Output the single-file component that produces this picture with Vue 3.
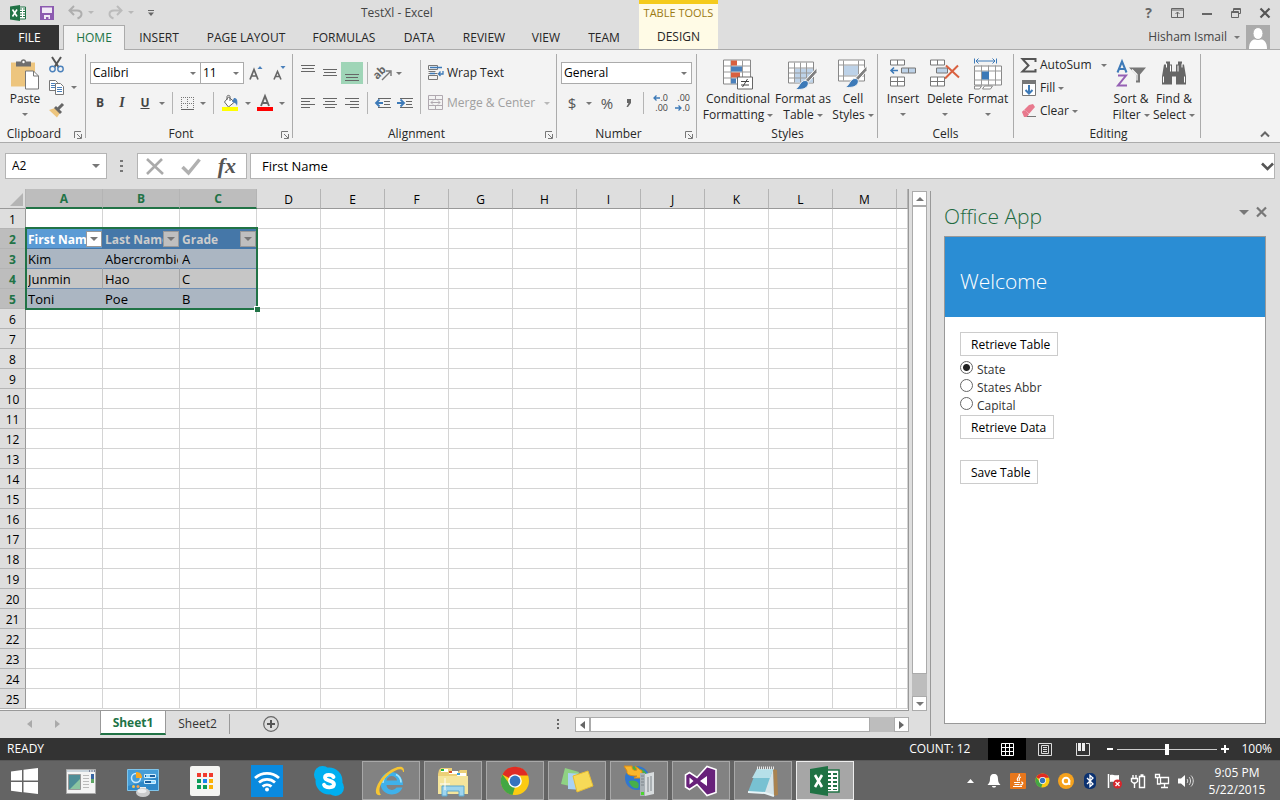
<script setup>
import { ref } from 'vue'

const tabs = [
  { name: 'HOME', w: 'w62' },
  { name: 'INSERT', w: 'w66' },
  { name: 'PAGE LAYOUT', w: 'w108' },
  { name: 'FORMULAS', w: 'w88' },
  { name: 'DATA', w: 'w62' },
  { name: 'REVIEW', w: 'w68' },
  { name: 'VIEW', w: 'w56' },
  { name: 'TEAM', w: 'w60' }
]
const columns = ['A', 'B', 'C', 'D', 'E', 'F', 'G', 'H', 'I', 'J', 'K', 'L', 'M', '']
const cells = {
  2: ['First Name', 'Last Name', 'Grade'],
  3: ['Kim', 'Abercrombie', 'A'],
  4: ['Junmin', 'Hao', 'C'],
  5: ['Toni', 'Poe', 'B']
}
const options = ['State', 'States Abbr', 'Capital']
const picked = ref('State')
const font = ref('Calibri')
const size = ref('11')
const format = ref('General')
const nameBox = ref('A2')
const formula = ref('First Name')
const zoom = ref(50)
</script>

<template>
  <div class="app">
    <header class="titlebar">
      <div class="quick">
        <svg class="q-excel" width="16" height="16" viewBox="0 0 16 16"><path d="M9 2h6.500v12H9z" fill="#fff" stroke="#217346" /><path d="M10 4h2M13 4h2M10 6.500h2M13 6.500h2M10 9h2M13 9h2M10 11.500h2M13 11.500h2" stroke="#217346" /><path d="M0 1.500 10 0v16L0 14.500z" fill="#217346" /><path d="m2.500 4.500 4.500 7M7 4.500l-4.500 7" stroke="#fff" stroke-width="1.600" /></svg>
        <button aria-label="Save"><svg width="14" height="14" viewBox="0 0 14 14"><path d="M0 0h14v14H0z" fill="#8c5bb0" /><path d="M2 1.500h10V7H2zM4 9h6v4H8.500v-2H6v2H4z" fill="#f1e9f6" /></svg></button>
        <button class="undo" aria-label="Undo"><svg width="15" height="13" viewBox="0 0 15 13"><path d="M6 0 1.500 4.500 6 9M2 4.500h7c3 0 4.500 1.500 4.500 3.500S12 11.500 9.500 12.500" fill="none" stroke="#aeaeae" stroke-width="2" /></svg><i class="caret pale"></i></button>
        <button class="redo" aria-label="Redo"><svg width="15" height="13" viewBox="0 0 15 13"><path d="m9 0 4.500 4.500L9 9M13 4.500H6C3 4.500 1.500 6 1.500 8S3 11.500 5.500 12.500" fill="none" stroke="#bbb" stroke-width="2" /></svg><i class="caret pale"></i></button>
        <button class="customize" aria-label="Customize Quick Access Toolbar"><svg width="6" height="6" viewBox="0 0 6 6"><path d="M0 .5h6" stroke="#666" /><path d="M0 2.500h6L3 6z" fill="#666" /></svg></button>
      </div>
      <h1 class="title">TestXl - Excel</h1>
      <div class="window-buttons">
        <button class="help" aria-label="Help">?</button>
        <button aria-label="Ribbon Display Options"><svg width="13" height="10" viewBox="0 0 13 10"><path d="M.5.5h12v9H.5zM.5 2h12M6.500 9V4M4.500 6l2-2 2 2" fill="none" stroke="#666" /></svg></button>
        <button aria-label="Minimize"><svg width="10" height="10" viewBox="0 0 10 10"><path d="M0 6h10" stroke="#666" stroke-width="2" /></svg></button>
        <button aria-label="Restore"><svg width="10" height="10" viewBox="0 0 10 10"><path d="M2.500 3V.5h7v5H7M.5 3.500h7v6h-7zM0 4.500h8M2 1.500h8" fill="none" stroke="#666" /></svg></button>
        <button aria-label="Close"><svg width="10" height="10" viewBox="0 0 10 10"><path d="m.5.5 9 9M9.500.5l-9 9" stroke="#555" stroke-width="2.200" /></svg></button>
      </div>
    </header>

    <nav class="tabs">
      <button class="file">FILE</button>
      <button v-for="t in tabs" :key="t.name" :class="['tab', t.w, { active: t.name === 'HOME' }]">{{ t.name }}</button>
      <div class="context">
        <span>TABLE TOOLS</span>
        <button>DESIGN</button>
      </div>
      <button class="user">Hisham Ismail <i class="caret"></i></button>
      <svg class="avatar" width="24" height="24" viewBox="0 0 24 24"><path d="M0 0h24v24H0z" fill="#ababab" /><path d="M3 24c0-7 3-9.500 6-9.500h6c3 0 6 2.500 6 9.500z" fill="#fff" /><ellipse cx="12" cy="8.500" rx="5" ry="6" fill="#fff" stroke="#ababab" /></svg>
    </nav>

    <section class="ribbon">
      <div class="group g-clip">
        <div class="body">
          <button class="big w42">
            <svg width="28" height="30" viewBox="0 0 28 30"><path d="M0 3h24v24H0z" fill="#edc57e" /><path d="M5 2h5c0-3 5-3 5 0h5v5H5z" fill="#6f6f6f" /><circle cx="12.500" cy="2.500" r="1.200" fill="#fff" /><path d="M14.500 11.500h8l5 5v13h-13z" fill="#fff" stroke="#777" /><path d="M22.500 11.500v5h5" fill="none" stroke="#777" /></svg>
            <span>Paste</span><i class="caret"></i>
          </button>
          <div class="clip-tools">
            <button aria-label="Cut"><svg width="15" height="16" viewBox="0 0 15 16"><path d="m3 0 6.500 10M12 0 5.500 10" stroke="#555" stroke-width="2" /><circle cx="3.500" cy="12" r="2.700" fill="none" stroke="#4a80bb" stroke-width="1.400" /><circle cx="11.500" cy="12" r="2.700" fill="none" stroke="#4a80bb" stroke-width="1.400" /></svg></button>
            <button aria-label="Copy"><svg width="16" height="15" viewBox="0 0 16 15"><path d="M.5.5h6l2 2v8h-8z" fill="#fff" stroke="#777" /><path d="M2 3.500h4M2 5.500h4M2 7.500h4" stroke="#4a80bb" /><path d="M6.500 3.500h5l3 3v8h-8z" fill="#fff" stroke="#777" /><path d="M8 7.500h5M8 9.500h5M8 11.500h5" stroke="#4a80bb" /></svg><i class="caret"></i></button>
            <button aria-label="Format Painter"><svg width="16" height="15" viewBox="0 0 16 15"><path d="M0 7 6 5l5 5-3 4.500z" fill="#edc57e" /><path d="m5 5 2-2 6 6-2 2z" fill="#666" /><path d="m9 6 5-5" stroke="#666" stroke-width="3" /></svg></button>
          </div>
        </div>
        <div class="label">Clipboard<button class="launch" aria-label="Clipboard settings"><svg width="8" height="8" viewBox="0 0 8 8"><path d="M.5 7V.5H7M3 3l4 4M7.500 3v4.500H3" fill="none" stroke="#777" /></svg></button></div>
      </div>

      <div class="group g-font">
        <div class="body col">
          <div class="row r1">
            <span class="pick w111"><select v-model="font" aria-label="Font"><option>Calibri</option></select><i class="caret"></i></span>
            <span class="pick w43"><select v-model="size" aria-label="Font size"><option>11</option></select><i class="caret"></i></span>
            <button class="ic w24" aria-label="Increase font size"><svg width="14" height="14" viewBox="0 0 14 14"><path d="m1 13.500 4-10 4 10M2.500 10h5" fill="none" stroke="#666" stroke-width="1.700" /><path d="M8.500 3h5L11 0z" fill="#4a80bb" /></svg></button>
            <button class="ic w22" aria-label="Decrease font size"><svg width="13" height="14" viewBox="0 0 13 14"><path d="m1 13.500 3.500-8 3.500 8M2.200 10.500h4.500" fill="none" stroke="#666" stroke-width="1.600" /><path d="M7.500 0h5L10 3z" fill="#4a80bb" /></svg></button>
          </div>
          <div class="row r2">
            <button class="ic w20 fmt"><b>B</b></button>
            <button class="ic w24 fmt ital"><i>I</i></button>
            <button class="ic w22 fmt"><u>U</u></button>
            <button class="ic w12" aria-label="Underline options"><i class="caret"></i></button>
            <span class="sep"></span>
            <button class="ic w20" aria-label="Borders"><svg width="13" height="13" viewBox="0 0 13 13"><path d="M.5 0v12M6.500 0v12M12.500 0v12M0 .5h13M0 6.500h13" stroke="#777" stroke-dasharray="1 1" /><path d="M0 12.500h13" stroke="#666" /></svg></button>
            <button class="ic w12" aria-label="Border options"><i class="caret"></i></button>
            <span class="sep"></span>
            <button class="ic w24" aria-label="Fill color"><svg width="16" height="16" viewBox="0 0 16 16"><path d="m6.500 2 6 5-6 5-4-5z" fill="#fff" stroke="#666" /><path d="M5 5V1.500c0-1.500 3-1.500 3 0V6" fill="none" stroke="#666" /><path d="M12 3c3 0 4 2 3 8-1-3-3-4-5-4z" fill="#4a80bb" /><path d="M0 12h16v4H0z" fill="#ff0" /></svg></button>
            <button class="ic w12" aria-label="Fill color options"><i class="caret"></i></button>
            <button class="ic w22" aria-label="Font color"><svg width="16" height="16" viewBox="0 0 16 16"><path d="m4 11 4-10 4 10M5.500 8h5" fill="none" stroke="#666" stroke-width="1.900" /><path d="M0 12h16v4H0z" fill="#f00" /></svg></button>
            <button class="ic w12" aria-label="Font color options"><i class="caret"></i></button>
          </div>
        </div>
        <div class="label">Font<button class="launch" aria-label="Font settings"><svg width="8" height="8" viewBox="0 0 8 8"><path d="M.5 7V.5H7M3 3l4 4M7.500 3v4.500H3" fill="none" stroke="#777" /></svg></button></div>
      </div>

      <div class="group g-align">
        <div class="body">
          <div class="col">
            <div class="row r1">
              <button class="ic w22" aria-label="Top align"><svg width="14" height="22" viewBox="0 0 14 22"><path d="M0 3.500h14M1 6.500h12M0 9.500h14" stroke="#666" /></svg></button>
              <button class="ic w22" aria-label="Middle align"><svg width="14" height="22" viewBox="0 0 14 22"><path d="M0 7.500h14M1 10.500h12M0 13.500h14" stroke="#666" /></svg></button>
              <button class="ic w22 on" aria-label="Bottom align"><svg width="14" height="22" viewBox="0 0 14 22"><path d="M0 12.500h14M1 15.500h12M0 18.500h14" stroke="#666" /></svg></button>
              <span class="sep"></span>
              <button class="ic w32" aria-label="Orientation"><svg width="17" height="16" viewBox="0 0 17 16"><text x="-2" y="11" transform="rotate(-45 5 8)" font-size="11" font-weight="bold" fill="#666">ab</text><path d="m7 15 8-8M11 6h5v5" fill="none" stroke="#777" stroke-width="1.400" /></svg><i class="caret"></i></button>
            </div>
            <div class="row r2">
              <button class="ic w22" aria-label="Align left"><svg width="14" height="11" viewBox="0 0 14 11"><path d="M0 .5h14M0 3.500h9M0 6.500h14M0 9.500h9" stroke="#666" /></svg></button>
              <button class="ic w22" aria-label="Center"><svg width="14" height="11" viewBox="0 0 14 11"><path d="M0 .5h14M2 3.500h10M0 6.500h14M2 9.500h10" stroke="#666" /></svg></button>
              <button class="ic w22" aria-label="Align right"><svg width="14" height="11" viewBox="0 0 14 11"><path d="M0 .5h14M5 3.500h9M0 6.500h14M5 9.500h9" stroke="#666" /></svg></button>
              <span class="sep"></span>
              <button class="ic w22" aria-label="Decrease indent"><svg width="16" height="11" viewBox="0 0 16 11"><path d="M3 .5h13M9 3.500h6M9 6.500h6M3 9.500h13" stroke="#666" /><path d="M8 5H1M4.500 1.500 1 5l3.500 3.500" fill="none" stroke="#3d7ab8" stroke-width="1.800" /></svg></button>
              <button class="ic w22" aria-label="Increase indent"><svg width="16" height="11" viewBox="0 0 16 11"><path d="M3 .5h13M9 3.500h6M9 6.500h6M3 9.500h13" stroke="#666" /><path d="M0 5h7M3.500 1.500 7 5 3.500 8.500" fill="none" stroke="#3d7ab8" stroke-width="1.800" /></svg></button>
            </div>
          </div>
          <div class="col wraps">
            <button class="row r1 txt"><svg width="16" height="16" viewBox="0 0 16 16"><path d="M.5.5h9v4h-9zM.5 6.500h7M.5 8.500h9M.5 10.500h9v4h-9z" fill="none" stroke="#777" /><path d="M2 2.500h12" stroke="#3d7ab8" stroke-width="1.500" /><path d="M2 8.500h5M15 6v3h-4M12.500 6.500l-2 2.500 2 2" fill="none" stroke="#3d7ab8" stroke-width="1.300" /></svg>Wrap Text</button>
            <button class="row r2 txt dim"><svg width="16" height="16" viewBox="0 0 16 16"><path d="M.5.5h14v14H.5zM.5 4.500h14M.5 10.500h14M7.500 0v4M7.500 11v4M3 7.500h9M5 5.500l-2 2 2 2M10 5.500l2 2-2 2" fill="none" stroke="#b0a9b0" /></svg>Merge &amp; Center<i class="caret pale"></i></button>
          </div>
        </div>
        <div class="label">Alignment<button class="launch" aria-label="Alignment settings"><svg width="8" height="8" viewBox="0 0 8 8"><path d="M.5 7V.5H7M3 3l4 4M7.500 3v4.500H3" fill="none" stroke="#777" /></svg></button></div>
      </div>

      <div class="group g-num">
        <div class="body col">
          <div class="row r1"><span class="pick w131"><select v-model="format" aria-label="Number format"><option>General</option></select><i class="caret"></i></span></div>
          <div class="row r2">
            <button class="ic w22 sym">$</button>
            <button class="ic w12" aria-label="Currency options"><i class="caret"></i></button>
            <button class="ic w24 sym">%</button>
            <button class="ic w20 sym comma" aria-label="Comma style"><svg width="6" height="8" viewBox="0 0 6 8"><path d="M1 0h4v4L2 8H.5L2.500 4H1z" fill="#666" /></svg></button>
            <span class="sep"></span>
            <button class="ic w20 dec"><span><svg width="7" height="6" viewBox="0 0 7 6"><path d="M7 3H1M3.500.5 1 3l2.500 2.500" fill="none" stroke="#3d7ab8" stroke-width="1.300" /></svg>.0</span><span>.00</span></button>
            <button class="ic w22 dec"><span>.00</span><span><svg width="7" height="6" viewBox="0 0 7 6"><path d="M0 3h6M3.500.5 6 3 3.500 5.500" fill="none" stroke="#3d7ab8" stroke-width="1.300" /></svg>.0</span></button>
          </div>
        </div>
        <div class="label">Number<button class="launch" aria-label="Number settings"><svg width="8" height="8" viewBox="0 0 8 8"><path d="M.5 7V.5H7M3 3l4 4M7.500 3v4.500H3" fill="none" stroke="#777" /></svg></button></div>
      </div>

      <div class="group g-styles">
        <div class="body">
          <button class="big w72">
            <svg width="30" height="30" viewBox="0 0 30 30"><path d="M.5.5h27v24H.5z" fill="#fff" stroke="#888" /><path d="M8 1v23M19.500 1v23M1 6.500h26M1 12.500h26M1 18.500h26" stroke="#999" /><path d="M8 1h6v5H8zM8 13h9v5H8z" fill="#d9603f" /><path d="M8 7h11v5H8zM8 19h5v5H8z" fill="#4a80bb" /><path d="M14.500 17.500h15v12h-15z" fill="#fff" stroke="#666" /><path d="M18 22h8M18 25.500h8M24.500 19.500l-5 8" stroke="#444" /></svg>
            <span>Conditional</span><span>Formatting<i class="caret"></i></span>
          </button>
          <button class="big w58">
            <svg width="30" height="30" viewBox="0 0 30 30"><path d="M.5 2.500h25v21H.5z" fill="#fff" stroke="#888" /><path d="M7 9h18v14H7z" fill="#bdd2e8" /><path d="M6.500 3v20M12.500 3v20M18.500 3v20M1 8.500h24M1 13.500h24M1 18.500h24" stroke="#999" /><path d="m17 21 12-13v5l-9 10z" fill="#808080" stroke="#fff" /><path d="M7 30c4-1 5-9 10-9 4 0 4 4 2 6-2 3-7 3-12 3z" fill="#3d7ab8" stroke="#f3f3f3" /></svg>
            <span>Format as</span><span>Table<i class="caret"></i></span>
          </button>
          <button class="big w42">
            <svg width="30" height="30" viewBox="0 0 30 30"><path d="M.5.5h26v21H.5z" fill="#fff" stroke="#888" /><path d="M6 6h14v10H6z" fill="#bdd2e8" /><path d="M5.500 1v20M20.500 1v20M1 5.500h25M1 16.500h25" stroke="#999" /><path d="m17 19 12-13v5l-9 10z" fill="#808080" stroke="#fff" /><path d="M7 28c4-1 5-9 10-9 4 0 4 4 2 6-2 3-7 3-12 3z" fill="#3d7ab8" stroke="#f3f3f3" /></svg>
            <span>Cell</span><span>Styles<i class="caret"></i></span>
          </button>
        </div>
        <div class="label">Styles</div>
      </div>

      <div class="group g-cells">
        <div class="body">
          <button class="big w42">
            <svg width="28" height="30" viewBox="0 0 28 30"><path d="M1.500.5h14v5h-14zM8.500.5v5M1.500 17.500h14v9h-14zM8.500 17.500v9M1.500 22h14" fill="#fff" stroke="#777" /><path d="M12.500 8.500h14v5h-14zM19.500 8.500v5" fill="#bdd2e8" stroke="#777" /><path d="M9 11H2M5 8l-3 3 3 3" fill="none" stroke="#3d7ab8" stroke-width="1.600" /></svg>
            <span>Insert</span><i class="caret"></i>
          </button>
          <button class="big w42">
            <svg width="30" height="30" viewBox="0 0 30 30"><path d="M.5.5h14v5H.5zM7.500.5v5M.5 17.500h14v9H.5zM7.500 17.500v9M.5 22h14" fill="#fff" stroke="#777" /><path d="M6.500 8.500h11v5h-11z" fill="#bdd2e8" stroke="#777" /><path d="m16 6 13 12M28 6 15 19" stroke="#d9603f" stroke-width="2" /></svg>
            <span>Delete</span><i class="caret"></i>
          </button>
          <button class="big w44">
            <svg width="28" height="32" viewBox="0 0 28 32"><path d="M.5 0v5M22.500 0v5M2 2.500h19M4.500 0 2 2.500 4.500 5M18.500 0 21 2.500 18.500 5" fill="none" stroke="#3d7ab8" /><path d="M.5 7.500h27v19H.5z" fill="#fff" stroke="#888" /><path d="M7.500 7v20M14.500 7v20M21.500 7v20M0 12.500h28M0 21.500h28" stroke="#999" /><path d="M8 13h7v8H8z" fill="#3d7ab8" /><path d="M.5 30.500v-3h7l-2 3zM8.500 30.500l2-3h8l-2 3z" fill="#fff" stroke="#888" /></svg>
            <span>Format</span><i class="caret"></i>
          </button>
        </div>
        <div class="label">Cells</div>
      </div>

      <div class="group g-edit">
        <div class="body">
          <div class="col edits">
            <button class="txt auto"><svg width="16" height="15" viewBox="0 0 16 15"><path d="M14.500 4V1H1.500l6 6.500-6 6h13V11" fill="none" stroke="#555" stroke-width="2" /></svg>AutoSum<i class="caret"></i></button>
            <button class="txt"><svg width="16" height="16" viewBox="0 0 16 16"><path d="M1.500.5h13v15h-13z" fill="#fff" stroke="#777" /><path d="M1 0h14v4H1z" fill="#777" /><path d="M8 5v8M4.500 10 8 13.500l3.500-3.500" fill="none" stroke="#3d7ab8" stroke-width="2" /></svg>Fill<i class="caret"></i></button>
            <button class="txt"><svg width="16" height="14" viewBox="0 0 16 14"><path d="m8 1 4-1 2 3-7 8-6-3z" fill="#e8798d" /><path d="m3 6 6 5" stroke="#fff" /><path d="m1 8 3-2 4 4-2 3H3z" fill="#e8798d" /><path d="M6 12.500h9" stroke="#777" /></svg>Clear<i class="caret"></i></button>
          </div>
          <button class="big w44">
            <svg width="30" height="30" viewBox="0 0 30 30"><path d="m1.500 13 4.500-11 4.500 11M3 9.500h6" fill="none" stroke="#3d7ab8" stroke-width="2" /><path d="M2 16h8L2 26h9" fill="none" stroke="#9560b4" stroke-width="2" /><path d="M13 8h17l-6 7v8h-4v-8z" fill="#777" /><path d="m16 10 5 5v6" fill="none" stroke="#fff" stroke-width="1.200" /></svg>
            <span>Sort &amp;</span><span>Filter<i class="caret"></i></span>
          </button>
          <button class="big w42">
            <svg width="26" height="30" viewBox="0 0 26 30"><path d="M5 2h4v3h2v7h4V5h2V2h4v3h2l2 12v8H15v-8h-4v8H1v-8L3 5h2z" fill="#666" /><path d="M2.500 17v6M23.500 17v6M5.500 4v4M9.500 6v6M17 6v6M21 4v4" stroke="#fff" /></svg>
            <span>Find &amp;</span><span>Select<i class="caret"></i></span>
          </button>
        </div>
        <div class="label">Editing</div>
      </div>
      <button class="collapse" aria-label="Collapse the ribbon"><svg width="10" height="6" viewBox="0 0 10 6"><path d="m1 5.500 4-4 4 4" fill="none" stroke="#666" stroke-width="2" /></svg></button>
    </section>

    <section class="formula-bar">
      <div class="name-box"><input v-model="nameBox" aria-label="Name box" /><button aria-label="Names"><i class="caret wide"></i></button></div>
      <svg class="grip" width="3" height="12" viewBox="0 0 3 12"><path d="M0 0h3v2H0zM0 5h3v2H0zM0 10h3v2H0z" fill="#777" /></svg>
      <div class="fx">
        <button aria-label="Cancel"><svg width="18" height="17" viewBox="0 0 18 17"><path d="m1 1 16 15M16 1 1 16" stroke="#aaa" stroke-width="2.600" /></svg></button>
        <button aria-label="Enter"><svg width="20" height="17" viewBox="0 0 20 17"><path d="m1.500 9 6 6L18.500 1.500" fill="none" stroke="#b0b0b0" stroke-width="3.500" /></svg></button>
        <button class="fn" aria-label="Insert function"><i>fx</i></button>
      </div>
      <div class="formula"><input v-model="formula" aria-label="Formula" /><button aria-label="Expand formula bar"><svg width="13" height="9" viewBox="0 0 13 9"><path d="m1 1.500 5.500 5.500L12 1.500" fill="none" stroke="#555" stroke-width="2.600" /></svg></button></div>
    </section>

    <main class="work">
      <section class="book">
        <div class="sheet-row">
          <div class="sheet">
            <table>
              <colgroup><col class="c-row" /><col v-for="n in 3" :key="n" class="c-wide" /><col v-for="n in 10" :key="n + 3" class="c-std" /><col class="c-rest" /></colgroup>
              <thead>
                <tr>
                  <th class="corner"><svg width="13" height="13" viewBox="0 0 13 13"><path d="M13 0v13H0z" fill="#b4b4b4" /></svg></th>
                  <th v-for="(c, i) in columns" :key="i" :class="{ sel: i < 3 }">{{ c }}</th>
                </tr>
              </thead>
              <tbody>
                <tr v-for="r in 25" :key="r" :class="'row-' + r">
                  <th :class="{ sel: r > 1 && r < 6 }">{{ r }}</th>
                  <td v-for="(c, i) in columns" :key="i" :class="{ data: cells[r] && i < 3, head: r === 2 && i < 3, first: r === 2 && i === 0 }">
                    <div v-if="cells[r] && i < 3" class="cell">
                      <span>{{ cells[r][i] }}</span>
                      <button v-if="r === 2" :aria-label="'Filter ' + cells[r][i]"><i class="caret wide"></i></button>
                    </div>
                  </td>
                </tr>
              </tbody>
            </table>
            <div class="selection"></div>
          </div>
          <div class="vscroll">
            <button aria-label="Scroll up"><i class="caret wide up"></i></button>
            <span class="thumb"></span><span class="trough"></span>
            <button aria-label="Scroll down"><i class="caret wide"></i></button>
          </div>
        </div>
        <div class="sheet-tabs">
          <div class="nav">
            <button aria-label="Previous sheet"><i class="arrow left"></i></button>
            <button aria-label="Next sheet"><i class="arrow right"></i></button>
          </div>
          <button class="stab current">Sheet1</button>
          <button class="stab">Sheet2</button>
          <button class="add" aria-label="New sheet"><svg width="16" height="16" viewBox="0 0 16 16"><circle cx="8" cy="8" r="7.300" fill="none" stroke="#666" stroke-width="1.200" /><path d="M8 4v8M4 8h8" stroke="#555" stroke-width="2" /></svg></button>
          <svg class="dots" width="2" height="10" viewBox="0 0 2 10"><path d="M0 0h2v2H0zM0 4h2v2H0zM0 8h2v2H0z" fill="#666" /></svg>
          <div class="hscroll">
            <button aria-label="Scroll left"><i class="arrow left dark"></i></button>
            <span class="thumb"></span><span class="trough"></span>
            <button aria-label="Scroll right"><i class="arrow right dark"></i></button>
          </div>
        </div>
      </section>

      <aside class="pane">
        <div class="pane-head">
          <h2>Office App</h2>
          <button aria-label="Pane options"><i class="caret big-caret"></i></button>
          <button aria-label="Close pane"><svg width="11" height="10" viewBox="0 0 11 10"><path d="m1 .5 9 9M10 .5l-9 9" stroke="#777" stroke-width="2.200" /></svg></button>
        </div>
        <div class="frame">
          <h3>Welcome</h3>
          <div class="content">
            <button>Retrieve Table</button>
            <div class="radios">
              <label v-for="o in options" :key="o"><input v-model="picked" type="radio" name="kind" :value="o" />{{ o }}</label>
            </div>
            <button>Retrieve Data</button>
            <button class="save">Save Table</button>
          </div>
        </div>
      </aside>
    </main>

    <footer class="status">
      <span>READY</span>
      <span class="count">COUNT: 12</span>
      <button class="view current" aria-label="Normal view"><svg width="13" height="13" viewBox="0 0 13 13"><path d="M.5.5h12v12H.5zM4.500 0v13M8.500 0v13M0 4.500h13M0 8.500h13" fill="none" stroke="#fff" /></svg></button>
      <button class="view" aria-label="Page layout view"><svg width="14" height="13" viewBox="0 0 14 13"><path d="M.5.5h13v12H.5zM3.500 2.500h7v8h-7zM5 4.500h4M5 6.500h4M5 8.500h4" fill="none" stroke="#ddd" /></svg></button>
      <button class="view" aria-label="Page break view"><svg width="14" height="13" viewBox="0 0 14 13"><path d="M.5 0v12.500h13V.5H10" fill="none" stroke="#ddd" /><path d="M2 0h3v8H2zM6 0h3v8H6z" fill="#eee" /></svg></button>
      <button class="zoom-b" aria-label="Zoom out"><svg width="6" height="8" viewBox="0 0 6 8"><path d="M0 4h6" stroke="#fff" stroke-width="2" /></svg></button>
      <input v-model="zoom" type="range" min="0" max="100" aria-label="Zoom" />
      <button class="zoom-b" aria-label="Zoom in"><svg width="8" height="8" viewBox="0 0 8 8"><path d="M0 4h8M4 0v8" stroke="#fff" stroke-width="2" /></svg></button>
      <span class="pct">100%</span>
    </footer>

    <div class="taskbar">
      <button class="start" aria-label="Start"><svg width="28" height="26" viewBox="0 0 28 26"><path d="M0 3.500 11 2v10.500H0zM12.500 1.800 27 0v12.500H12.500zM0 14h11v10.300L0 22.800zM12.500 14H27v12l-14.500-1.800z" fill="#fff" /></svg></button>
      <button class="pin" aria-label="Window"><svg width="32" height="32" viewBox="0 0 32 32"><path d="M1.500 4.500h29v24h-29z" fill="#f4f4f4" stroke="#aaa" /><path d="M2 5h28v2H2z" fill="#c9d4dc" /><path d="M24 6h1M26.500 6h1M29 6h1" stroke="#335" /><path d="M3.500 9.500h12v15h-12z" fill="#4d8d97" stroke="#999" /><path d="m5 24 10-10v10z" fill="#8bc5a1" /><path d="M18 10.500h6M18 13.500h6M18 16.500h6M18 19.500h6M18 22.500h6" stroke="#bbb" /><path d="M26 9h3v9h-3z" fill="#3664a1" /><path d="M26 14h3v4h-3z" fill="#5ea564" /></svg></button>
      <button class="pin" aria-label="Control Panel"><svg width="32" height="32" viewBox="0 0 32 32"><path d="M.5 4.500h31v21H.5z" fill="#2f88c8" stroke="#7fc4ea" /><path d="M1 5h30v7L1 21z" fill="#459dd8" /><circle cx="9" cy="13" r="4.500" fill="none" stroke="#c9eaff" stroke-width="1.500" /><path d="M9 13V7c4 0 6 2 6 6z" fill="#f7a723" /><path d="M17.500 9.500h11v3h-11zM17.500 15.500h11v3h-11z" fill="#195e9e" stroke="#d5f0ff" /><path d="M19 11h4M24 17h4" stroke="#8fd8ff" stroke-width="2" /><circle cx="6.500" cy="21.500" r="1.500" fill="#f8c04c" /><circle cx="11" cy="21.500" r="1.500" fill="#f8a04c" /><path d="M13 22h6v4h-6z" fill="#eee" /><ellipse cx="16" cy="27.500" rx="7" ry="4.500" fill="#ccc" /><ellipse cx="15" cy="26" rx="4.500" ry="2" fill="#eee" /></svg></button>
      <button class="pin" aria-label="App launcher"><svg width="30" height="32" viewBox="0 0 30 32"><rect y="1" width="30" height="30" rx="2" fill="#f5f5f2" /><path d="M7 8h4v4H7zM13 8h4v4h-4zM19 8h4v4h-4z" fill="#f03b2e" /><path d="M7 14h4v4H7zM7 20h4v4H7zM13 20h4v4h-4z" fill="#0b9d58" /><path d="M13 14h4v4h-4z" fill="#1a83ee" /><path d="M19 14h4v4h-4zM19 20h4v4h-4z" fill="#fbb205" /></svg></button>
      <button class="pin" aria-label="Wi-Fi"><svg width="32" height="32" viewBox="0 0 32 32"><path d="M0 0h32v32H0z" fill="#0a8ade" /><path d="M4 13a18 18 0 0 1 24 0M8 17.500a12 12 0 0 1 16 0M11.500 21.500a7 7 0 0 1 9 0" fill="none" stroke="#fff" stroke-width="2.800" /><circle cx="16" cy="24.500" r="2" fill="#fff" /></svg></button>
      <button class="pin" aria-label="Skype"><svg width="32" height="32" viewBox="0 0 32 32"><circle cx="9.500" cy="9.500" r="8.500" fill="#00aff0" /><circle cx="22.500" cy="22.500" r="8.500" fill="#00aff0" /><circle cx="16" cy="16" r="13.500" fill="#00aff0" /><path d="M20.500 12c-1.500-2.800-8.500-3-8.500.5 0 4 9 2.300 9 6.800 0 4-8.500 4-10 .5" fill="none" stroke="#fff" stroke-width="3.800" stroke-linecap="round" /></svg></button>

      <button class="open" aria-label="Internet Explorer"><svg width="32" height="32" viewBox="0 0 32 32"><path fill-rule="evenodd" d="M28 20H11.500c.5 5.500 7.500 6.500 10 2.500h6C23.500 33 5.500 31.500 5.500 18c0-15 22.500-15 22.500 2zM11.500 15.500h10.500c-.8-6-9.700-6-10.500 0z" fill="#3fb1ea" /><path d="M26 17.500c0-4-2-6.500-5-8M8 18c0-4 2-7 5-8.500" fill="none" stroke="#a4e4fb" stroke-width="1.600" /><path d="M6 30C-4 32 2 15 13 7 21 1 30-1 29 7h-1c0-5-7-3-14 2.500C6 16 2 25 6 30z" fill="#f6c532" /></svg></button>
      <button class="open" aria-label="File Explorer"><svg width="32" height="32" viewBox="0 0 32 32"><path d="M2 5 4 3h11v4h6l2-2h7v23H1V9z" fill="#ecd078" /><path d="M4 4h7v3H4z" fill="#fff" /><path d="M4 4h3v2H4z" fill="#20b53c" /><path d="M12 6h9v3h-9z" fill="#fff" /><path d="M12 6h3v2h-3z" fill="#d4502c" /><path d="M20 8h9v3h-9z" fill="#fff" /><path d="M20 8h3v2h-3z" fill="#39a0d9" /><path d="M1 11h30v18H1z" fill="#f5e59c" /><path d="M5 31V21h22v10h-5v-5H10v5z" fill="#9ed5ee" stroke="#5aa7cf" /><path d="M8 13v12M3 19h10" stroke="#fff" /></svg></button>
      <button class="open" aria-label="Chrome"><svg width="30" height="30" viewBox="0 0 30 30"><circle cx="15" cy="15" r="14" fill="#fccb12" /><path d="M15 15 2.500 8.500A14 14 0 0 1 28 9.500H15z" fill="#e02b24" /><path d="m2.500 8.500 7 9.500L15 21l-2.500 8A14 14 0 0 1 2.500 8.500z" fill="#43a744" /><circle cx="15" cy="15" r="6.800" fill="#fff" /><circle cx="15" cy="15" r="5.400" fill="#3573be" /></svg></button>
      <button class="open" aria-label="Sticky Notes"><svg width="34" height="30" viewBox="0 0 34 30"><path d="m5 2 14 4-5 15L1 18z" fill="#8fd283" /><path d="m8 7 14 1 1 16-15-1z" fill="#a9d2f4" /><path d="m13 10 15-5 5 15-16 6z" fill="#f7da57" stroke="#e6bc35" /></svg></button>
      <button class="open" aria-label="Web server"><svg width="32" height="32" viewBox="0 0 32 32"><circle cx="14" cy="13" r="12" fill="#3277cf" /><path d="M9 2c9-2 8 4 4 6l-8 2c-1-3 1-6 4-8zM6 16c6-2 12 1 9 7-4 1-8-2-9-7zM18 4c5 2 7 6 6 9l-6-3z" fill="#46b04b" /><path d="M1 1h8c0 4 2 5 5 4l-2-4 7 5v7h-8l3-2C6 11 3 9 4 6z" fill="#f9b62c" stroke="#d98a17" /><path d="M17 8h5v23h-5z" fill="#a9b1b6" /><path d="m22 9 9-2v22l-9 2z" fill="#d8dcde" /><path d="M18 11h3M18 14h3M18 17h3M18 20h3M25 12v15M28 11v15" stroke="#7e868b" /><path d="M18 27h3v3h-3z" fill="#4cd52e" /></svg></button>
      <button class="open" aria-label="Visual Studio"><svg width="34" height="32" viewBox="0 0 34 32"><path d="m1.500 10 4-2.500 7.500 5L23 1.500l9 3v23l-9 3-10-11-7.500 5-4-2.500z" fill="#68217a" stroke="#fff" stroke-width="1.600" /><path d="m5.500 12.500 4 3.500-4 3.500zM23 11v10l-7-5z" fill="#fff" /></svg></button>
      <button class="open" aria-label="Notepad"><svg width="32" height="32" viewBox="0 0 32 32"><path d="m26 4 4 1 1 25-4 1z" fill="#a98350" /><path d="M10 4h16l1 27-10-3z" fill="#d5e4e8" /><path d="M10 4h16L18 27H1z" fill="#78c1d2" /><path d="M10 4h16l-3 9H5z" fill="#b6e0e9" /><path d="m1 27 17 1 9 3" stroke="#e9f5f8" stroke-width="2" fill="none" /><path d="M10 3h17" stroke="#e8e8e8" stroke-width="3" stroke-dasharray="1 1" /></svg></button>
      <button class="open active" aria-label="Excel"><svg width="32" height="32" viewBox="0 0 32 32"><path d="M17 5h13v22H17z" fill="#fff" stroke="#217346" stroke-width="1.500" /><path d="M19 8h3v2h-3zM24 8h4v2h-4zM19 12h3v2h-3zM24 12h4v2h-4zM19 16h3v2h-3zM24 16h4v2h-4zM19 20h3v2h-3zM24 20h4v2h-4zM19 24h3v1h-3zM24 24h4v1h-4z" fill="#217346" /><path d="m1 4 18-3v30L1 28z" fill="#1f7244" /><path d="m6 10 7 12M13 10 6 22" stroke="#fff" stroke-width="2.600" /></svg></button>

      <div class="tray">
        <button aria-label="Show hidden icons"><svg width="7" height="4" viewBox="0 0 7 4"><path d="M0 4h7L3.500 0z" fill="#fff" /></svg></button>
        <button aria-label="Notifications"><svg width="14" height="16" viewBox="0 0 14 16"><path d="M7 1c-3 0-4 2-4 5 0 3-1 4-2.500 6h13C12 10 11 9 11 6c0-3-1-5-4-5zM5 13h4c0 2-4 2-4 0z" fill="#fff" /></svg></button>
        <button aria-label="Java"><svg width="16" height="16" viewBox="0 0 16 16"><rect width="16" height="16" rx="1" fill="#e8771c" /><path d="M9 1c2 3-4 4-1 7M4 9.500h6M4.500 11.500h5M3 13.500h9M11 9c3 0 2 3-1 3M11 4C8 5 10 6 9 8" fill="none" stroke="#fff" stroke-width="1.100" /></svg></button>
        <button aria-label="Chrome"><svg width="15" height="15" viewBox="0 0 30 30"><circle cx="15" cy="15" r="14" fill="#fccb12" /><path d="M15 15 2.500 8.500A14 14 0 0 1 28 9.500H15z" fill="#e02b24" /><path d="m2.500 8.500 7 9.500L15 21l-2.500 8A14 14 0 0 1 2.500 8.500z" fill="#43a744" /><circle cx="15" cy="15" r="6.800" fill="#fff" /><circle cx="15" cy="15" r="5.400" fill="#3573be" /></svg></button>
        <button aria-label="Antivirus"><svg width="16" height="16" viewBox="0 0 16 16"><circle cx="8" cy="8" r="8" fill="#f6a21d" /><circle cx="8" cy="8" r="3.300" fill="none" stroke="#fff" stroke-width="2" /><path d="M11.300 7v5" stroke="#fff" stroke-width="2" /></svg></button>
        <button aria-label="Bluetooth"><svg width="12" height="16" viewBox="0 0 12 16"><rect width="12" height="16" rx="5" fill="#0b3170" /><path d="m3 5 6 6-3 2.500v-11L9 5l-6 6" fill="none" stroke="#fff" stroke-width="1.300" /></svg></button>
        <button aria-label="Action Center"><svg width="15" height="16" viewBox="0 0 15 16"><path d="M1.500 1v14" stroke="#fff" stroke-width="1.500" /><path d="M3 2c3-1 4 1 9 0v7c-4 1-6-1-9 0z" fill="#fff" /><circle cx="10.500" cy="11" r="4.500" fill="#d8262c" /><path d="m8.500 9 4 4M12.500 9l-4 4" stroke="#fff" stroke-width="1.300" /></svg></button>
        <button aria-label="Battery"><svg width="15" height="16" viewBox="0 0 15 16"><path d="M8.500 3.500h5v11h-5zM9.500 2h3M.5 5.500h6v3L4.500 10h-2L.5 8.500zM2 2v3M5 2v3M3.500 10v5" fill="none" stroke="#fff" stroke-width="1.400" /></svg></button>
        <button aria-label="Network"><svg width="16" height="16" viewBox="0 0 16 16"><path d="M6.500 4.500h8v6h-8zM10.500 11v3M7 14.500h7M1.500 1.500h4v3h-4zM3.500 5v6h3" fill="none" stroke="#fff" stroke-width="1.300" /></svg></button>
        <button aria-label="Volume"><svg width="16" height="14" viewBox="0 0 16 14"><path d="M0 4.500h3L7 1v12L3 9.500H0z" fill="#fff" /><path d="M9 5c1 1 1 3 0 4M11 3c2 2 2 6 0 8M13 1.500c3 3 3 8 0 11" fill="none" stroke="#ddd" /></svg></button>
      </div>
      <div class="clock"><span>9:05 PM</span><span>5/22/2015</span></div>
    </div>
  </div>
</template>

<style>
body { background: #dedede; }
</style>

<style scoped>
* { box-sizing: border-box; }
.app { display: flex; flex-direction: column; min-height: 100vh; background: #dedede; color: #262626; font: 12px/16px "Open Sans", "Noto Sans", sans-serif; }
button, input, select { font: inherit; color: inherit; margin: 0; padding: 0; border: 0; background: none; }
button { display: flex; align-items: center; justify-content: center; flex: none; white-space: nowrap; }
svg { display: block; flex: none; overflow: visible; }
h1, h2, h3 { margin: 0; font-weight: 400; }
.caret { display: block; flex: none; width: 0; height: 0; border: 3px solid transparent; border-top-color: #777; border-bottom: 0; }
.caret.pale { border-top-color: #b8b8b8; }
.caret.wide { border-width: 4px; border-bottom: 0; }
.caret.up { transform: rotate(180deg); }
.caret.big-caret { border-width: 5px; border-bottom: 0; }
.arrow { border: 4px solid transparent; }
.arrow.left { border-right: 5px solid #aaa; border-left: 0; }
.arrow.right { border-left: 5px solid #aaa; border-right: 0; }
.arrow.left.dark { border-right-color: #666; }
.arrow.right.dark { border-left-color: #666; }
.w12 { width: 12px; } .w20 { width: 20px; } .w22 { width: 22px; } .w24 { width: 24px; } .w32 { width: 32px; }
.w42 { width: 42px; } .w43 { width: 43px; } .w44 { width: 44px; } .w56 { width: 56px; } .w58 { width: 58px; } .w60 { width: 60px; }
.w62 { width: 62px; } .w66 { width: 66px; } .w68 { width: 68px; } .w72 { width: 72px; }
.w88 { width: 88px; } .w108 { width: 108px; } .w111 { width: 111px; } .w131 { width: 131px; }

.titlebar { display: flex; height: 25px; align-items: center; }
.quick { display: flex; align-items: center; width: 361px; padding-left: 10px; }
.quick button { margin-left: 14px; }
.quick button.undo { gap: 5px; margin-left: 14px; }
.quick button.redo { gap: 5px; margin-left: 14px; }
.quick button.customize { margin-left: 14px; }
.title { flex: 1; font-size: 12px; color: #444; }
.window-buttons { display: flex; padding-right: 1px; }
.window-buttons button { width: 29px; height: 22px; }
.help { font-weight: 700; font-size: 14px; color: #666; }

.tabs { display: flex; height: 25px; border-bottom: 1px solid #ababab; }
.file { width: 59px; height: 25px; margin-right: 4px; background: #333; color: #fff; }
.tab { height: 25px; }
.tab.active { margin-right: 1px; background: #f3f3f3; border: 1px solid #ababab; border-bottom: 0; color: #217346; }
.context { display: flex; flex-direction: column; width: 79px; height: 49px; margin: -25px auto 0 5px; background: #fffbe6; border-top: 4px solid #f5cb1b; color: #9c7a12; text-align: center; white-space: nowrap; }
.context span { height: 21px; font-size: 11px; line-height: 18px; }
.context button { height: 25px; color: #262626; }
.user { gap: 7px; color: #444; margin-right: 6px; }
.avatar { margin-right: 10px; }

.ribbon { display: flex; height: 93px; padding-top: 4px; background: #f3f3f3; border-bottom: 1px solid #ababab; }
.group { display: flex; flex-direction: column; height: 84px; border-right: 1px solid #ababab; }
.g-clip { width: 86px; padding-left: 4px; }
.g-font { width: 207px; padding-left: 4px; }
.g-align { width: 264px; padding-left: 4px; }
.g-num { width: 140px; padding-left: 4px; }
.g-styles { width: 181px; padding-left: 5px; }
.g-cells { width: 136px; padding-left: 4px; }
.g-edit { width: 187px; padding-left: 7px; }
.body { display: flex; flex: 1; }
.col { display: flex; flex-direction: column; }
.label { position: relative; height: 12px; line-height: 16px; margin-left: -4px; text-align: center; }
.g-clip .label { padding-right: 17px; }
.g-font .label, .g-align .label, .g-num .label { padding-right: 16px; }
.launch { position: absolute; right: 3px; top: 5px; }
.big { flex-direction: column; justify-content: flex-start; padding-top: 4px; }
.big svg { height: 33px; }
.big span { display: flex; align-items: center; gap: 3px; line-height: 16px; }
.big > .caret { margin-top: 6px; }
.clip-tools { display: flex; flex-direction: column; gap: 8px; align-items: flex-start; padding: 3px 0 0 3px; }
.clip-tools button { gap: 6px; height: 15px; }
.row { display: flex; align-items: center; }
.r1 { height: 22px; margin-top: 8px; }
.r2 { height: 22px; margin-top: 8px; }
.ic { height: 22px; }
.pick { position: relative; height: 22px; border: 1px solid #ababab; background: #fff; color: #000; }
.pick + .pick { border-left: 0; }
.pick select { width: 100%; height: 20px; padding-left: 2px; appearance: none; outline: 0; }
.pick .caret { position: absolute; right: 4px; top: 9px; }
.sep { width: 1px; height: 22px; margin: 0 4px; background: #b4b4b4; }
.fmt { color: #444; font-size: 12px; }
.fmt b, .fmt u { font-weight: 700; }
.ital { font-family: "Liberation Serif", serif; font-weight: 700; font-size: 14px; }
.on { background: #9fd5b7; }
.w32 { gap: 4px; }
.wraps { margin-left: 4px; padding-left: 7px; border-left: 1px solid #b4b4b4; height: 54px; margin-top: 6px; }
.wraps .r1 { margin-top: 2px; }
.txt { gap: 3px; justify-content: flex-start; }
.dim { color: #a0a0a0; }
.dim .caret { margin-left: 6px; }
.sym { font-size: 15px; color: #555; }
.dec { flex-direction: column; font-size: 9px; line-height: 10px; align-items: flex-end; color: #444; }
.dec span { display: flex; align-items: center; }
.edits { width: 88px; gap: 7px; padding-top: 3px; }
.edits .txt { height: 16px; }
.auto .caret { margin-left: 6px; }
.collapse { margin: auto 10px 5px auto; }

.formula-bar { display: flex; height: 46px; padding: 10px 5px; }
.name-box { display: flex; width: 102px; border: 1px solid #b4b4b4; background: #fff; color: #000; }
.name-box input { width: 84px; padding-left: 6px; }
.name-box button { width: 12px; }
.grip { margin: 7px 14px 0 13px; }
.fx { display: flex; width: 110px; margin-right: 3px; padding: 0 10px 0 8px; justify-content: space-between; border: 1px solid #b4b4b4; background: #fff; }
.fn { font: italic 700 22px/22px "Liberation Serif", serif; color: #555; }
.formula { display: flex; flex: 1; border: 1px solid #b4b4b4; background: #fff; color: #000; }
.formula input { flex: 1; min-width: 0; padding-left: 11px; font-size: 13px; }
input:focus { outline: 0; }

.work { display: flex; flex: 1; }
.book { display: flex; flex: 1; min-width: 0; flex-direction: column; }
.sheet-row { display: flex; flex: 1; }
.sheet { position: relative; flex: 1; min-width: 0; overflow: hidden; background: #fff; border-right: 1px solid #999; border-bottom: 1px solid #999; }
table { width: 100%; table-layout: fixed; border-collapse: separate; border-spacing: 0; color: #000; }
.c-row { width: 26px; } .c-wide { width: 77px; } .c-std { width: 64px; }
th { height: 20px; padding: 1px 0 0; font-weight: 400; background: #dedede; line-height: 17px; border-right: 1px solid #b4b4b4; border-bottom: 1px solid #999; }
tbody th { padding-top: 2px; border-right-color: #999; border-bottom-color: #b4b4b4; }
th.sel { background: #bdbdbd; color: #217346; font-weight: 700; }
thead th.sel { padding-top: 2px; line-height: 16px; border-bottom: 2px solid #217346; }
.corner svg { margin: 1px 0 0 10px; }
td { height: 20px; padding: 0; border-right: 1px solid #d4d4d4; border-bottom: 1px solid #d4d4d4; font-size: 13px; line-height: 21px; }
.cell { display: flex; height: 19px; padding: 0 1px 0 2px; overflow: hidden; white-space: nowrap; }
.cell span { flex: 1; min-width: 0; overflow: hidden; }
.cell button { width: 16px; height: 16px; margin-top: 2px; border: 1px solid #999; background: #bfbfbf; }
.data { background: #abb6c2; border-color: #abb6c2; border-bottom-color: #6c8db3; }
.row-4 .data { background: #c6c6c6; border-right-color: #a4a4a4; }
.head { background: #4577a8; border-color: #4577a8; color: #ccc; font-size: 12px; font-weight: 700; }
.head .cell { padding-right: 0; }
.first { background: #5b9bd5; color: #fff; }
.first .cell button { background: #fff; }
.selection { position: absolute; left: 25px; top: 38px; width: 233px; height: 83px; border: 2px solid #217346; pointer-events: none; }
.selection::after { content: ""; position: absolute; right: -4px; bottom: -4px; width: 5px; height: 5px; background: #217346; border: 1px solid #fff; box-sizing: content-box; border-width: 1px 0 0 1px; }
.vscroll { display: flex; flex-direction: column; width: 15px; margin: 2px 3px 0; }
.vscroll button, .hscroll button { background: #fff; border: 1px solid #ababab; }
.vscroll button { height: 15px; }
.vscroll .thumb { flex: 1; background: #fff; border: 1px solid #ababab; }
.vscroll .trough { height: 22px; background: #bdbdbd; }
.sheet-tabs { display: flex; height: 27px; padding-right: 21px; }
.nav { display: flex; width: 100px; padding: 0 0 2px 25px; gap: 19px; }
.nav button { width: 9px; }
.stab { width: 64px; height: 25px; color: #333; }
.stab.current { width: 66px; padding-top: 3px; background: #fff; border: 1px solid #999; border-top: 0; border-bottom: 2px solid #217346; color: #217346; font-weight: 700; margin-top: -1px; }
.stab:not(.current) { border-right: 1px solid #999; height: 20px; margin-top: 3px; }
.add { width: 81px; height: 26px; }
.dots { margin: 8px 16px 0 auto; }
.hscroll { display: flex; width: 334px; height: 15px; margin-top: 6px; }
.hscroll button { width: 15px; }
.hscroll .thumb { flex: 1; background: #fff; border: 1px solid #ababab; }
.hscroll .trough { width: 24px; background: #bdbdbd; }

.pane { display: flex; flex-direction: column; width: 350px; flex: none; margin: 2px 0; padding: 0 14px 12px 13px; border-left: 1px solid #999; }
.pane-head { display: flex; height: 45px; align-items: flex-start; gap: 7px; }
.pane-head h2 { flex: 1; margin-top: 11px; font-size: 21px; line-height: 28px; font-weight: 300; color: #1e6b41; }
.pane-head button { height: 12px; margin-top: 15px; }
.pane-head button:last-child { margin-right: -1px; }
.frame { flex: 1; border: 1px solid #999; background: #fff; }
.frame h3 { height: 80px; padding: 29px 15px 0; background: #2a8dd4; color: #fff; font-size: 21px; line-height: 30px; font-weight: 300; }
.content { display: flex; flex-direction: column; align-items: flex-start; padding: 15px; }
.content button { height: 24px; padding: 2px 7px 0 10px; border: 1px solid #ccc; background: #fff; color: #000; }
.content .save { margin-top: 21px; }
.radios { padding: 4px 0 1px; }
.radios label { display: flex; gap: 4px; height: 18px; line-height: 20px; color: #333; }
.radios input { appearance: none; width: 13px; height: 13px; margin-top: 1px; border: 1px solid #666; border-radius: 50%; background: #fff; }
.radios input:checked { background: radial-gradient(#222 0 3px, #fff 4px); }

.status { display: flex; align-items: center; height: 22px; padding: 0 8px 0 7px; background: #333; color: #fff; }
.status span { white-space: nowrap; }
.count { margin: 0 18px 0 auto; }
.view { width: 38px; height: 22px; }
.view.current { background: #000; }
.zoom-b { width: 10px; }
.view + .zoom-b { margin-left: 3px; }
.status input { appearance: none; width: 100px; height: 12px; margin: 0 3px 0 2px; background: linear-gradient(#ccc, #ccc) center / 100% 1px no-repeat; }
.status input::-webkit-slider-thumb { appearance: none; width: 4px; height: 11px; background: #fff; }
.pct { margin-left: 11px; }

.taskbar { display: flex; align-items: center; height: 40px; background: #646464; border-top: 1px solid #585858; color: #fff; }
.start { width: 50px; height: 39px; }
.pin { width: 62px; height: 39px; }
.open { width: 58px; height: 39px; margin-right: 4px; border: 1px solid #a8a8a8; background: #828282; }
.pin + .open { margin-left: 2px; }
.open.active { border-color: #eee; background: #a6a6a6; }
.tray { display: flex; margin-left: auto; }
.tray button { width: 24px; height: 39px; }
.clock { display: flex; flex-direction: column; width: 78px; text-align: center; line-height: 17px; margin-right: 4px; }
</style>
